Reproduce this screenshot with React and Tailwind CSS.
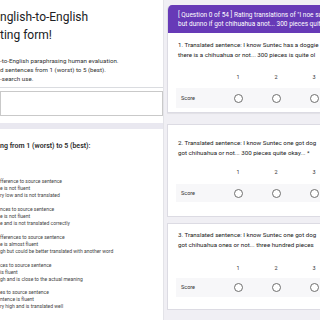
import React from "react";

const groups = [
  ["fference to source sentence", "e is not fluent", "ry low and is not translated"],
  ["nces to source sentence", "e is not fluent", "e and is not translated correctly"],
  ["fferences to source sentence", "e is almost fluent", "gh but could be better translated with another word"],
  ["ces to source sentence", "is fluent", "gh and is close to the actual meaning"],
  ["es to source sentence", "ntence is fluent", "ry high and is translated well"],
];

function Radio() {
  return <div className="w-[9px] h-[9px] rounded-full border border-[#6f6f6f] bg-white" />;
}

function ScoreGrid({ headMt, rowMt, rowH }) {
  return (
    <div className="ml-[8px]">
      <div className={`grid grid-cols-[43px_38px_38px_38px] ${headMt} h-[10px] items-center text-[5.5px] text-[#333]`}>
        <div />
        <div className="text-center">1</div>
        <div className="text-center">2</div>
        <div className="text-center">3</div>
      </div>
      <div className={`grid grid-cols-[43px_38px_38px_38px] ${rowMt} ${rowH} items-center bg-[#f7f7f9] text-[5.5px] text-[#333]`}>
        <div className="pl-[5px]">Score</div>
        <div className="flex justify-center"><Radio /></div>
        <div className="flex justify-center"><Radio /></div>
        <div className="flex justify-center"><Radio /></div>
      </div>
    </div>
  );
}

export default function App() {
  return (
    <div
      className="w-[320px] h-[320px] overflow-hidden flex bg-[#f0eff4]"
      style={{ fontFamily: "Roboto, 'Liberation Sans', sans-serif" }}
    >
      {/* Left column */}
      <div className="w-[164px] shrink-0 bg-white h-full border-r border-[#e3e3e8] flex flex-col">
        <div className="pt-[8px] pb-[3px] border-b border-[#dadce0]">
          <div className="text-[12px] leading-[18px] text-[#202124] whitespace-nowrap">
            <div>nglish-to-English</div>
            <div>ting form!</div>
          </div>
          <div className="mt-[13px] text-[6.2px] leading-[9px] text-[#333] whitespace-nowrap">
            <div>-to-English paraphrasing human evaluation.</div>
            <div>d sentences from 1 (worst) to 5 (best).</div>
            <div>-search use.</div>
          </div>
        </div>
        <div className="mt-[3px] h-[25px] w-[163px] border border-[#c9c9c9] bg-white" />
        <div className="mt-[7px] h-[6px] bg-[#e9e8f0]" />
        <div className="mt-[13px] text-[7px] leading-[8px] font-semibold text-[#2b2b2b] whitespace-nowrap">
          ng from 1 (worst) to 5 (best):
        </div>
        <div className="mt-[28px] text-[5px] leading-[7px] text-[#444] whitespace-nowrap flex flex-col gap-[7px]">
          {groups.map((g, i) => (
            <div key={i} className={i === 4 ? "mt-[-1px]" : ""}>
              {g.map((l, j) => (
                <div key={j}>{l}</div>
              ))}
            </div>
          ))}
        </div>
      </div>

      {/* Right column */}
      <div className="flex-1 pl-[3px] pt-[5px] flex flex-col overflow-hidden">
        <div className="bg-white rounded-tl-[5px] overflow-hidden border-l border-b border-[#dcdbe3] shadow-[0_1px_1px_rgba(0,0,0,0.06)]">
          <div className="h-[28px] bg-[#673ab7] pl-[10px] pt-[6px] text-[6.5px] leading-[9px] text-white whitespace-nowrap">
            <div>[ Question 0 of 54 ] Rating translations of "I noe su</div>
            <div>but dunno if got chihuahua anot... 300 pieces quite</div>
          </div>
          <div className="pt-[7px] pb-[4px]">
            <div className="pl-[10px] text-[6.2px] leading-[10px] text-[#222] whitespace-nowrap">
              <div>1. Translated sentence: I know Suntec has a doggie</div>
              <div>there is a chihuahua or not... 300 pieces is quite ol</div>
            </div>
            <ScoreGrid headMt="mt-[12px]" rowMt="mt-[6px]" rowH="h-[20px]" />
          </div>
        </div>

        <div className="mt-[11px] bg-white border-l border-b border-t border-[#dcdbe3] pt-[13px] pb-[14px]">
          <div className="pl-[10px] text-[6.2px] leading-[10px] text-[#222] whitespace-nowrap">
            <div>2. Translated sentence: I know Suntec one got dog</div>
            <div>got chihuahua or not... 300 pieces quite okay... *</div>
          </div>
          <ScoreGrid headMt="mt-[9px]" rowMt="mt-[7px]" rowH="h-[18px]" />
        </div>

        <div className="mt-[6px] bg-white border-l border-b border-t border-[#dcdbe3] pt-[6px] pb-[12px]">
          <div className="pl-[10px] text-[6.2px] leading-[10px] text-[#222] whitespace-nowrap">
            <div>3. Translated sentence: I know Suntec one got dog</div>
            <div>got chihuahua ones or not... three hundred pieces</div>
          </div>
          <ScoreGrid headMt="mt-[13px]" rowMt="mt-[5px]" rowH="h-[19px]" />
        </div>
      </div>
    </div>
  );
}
